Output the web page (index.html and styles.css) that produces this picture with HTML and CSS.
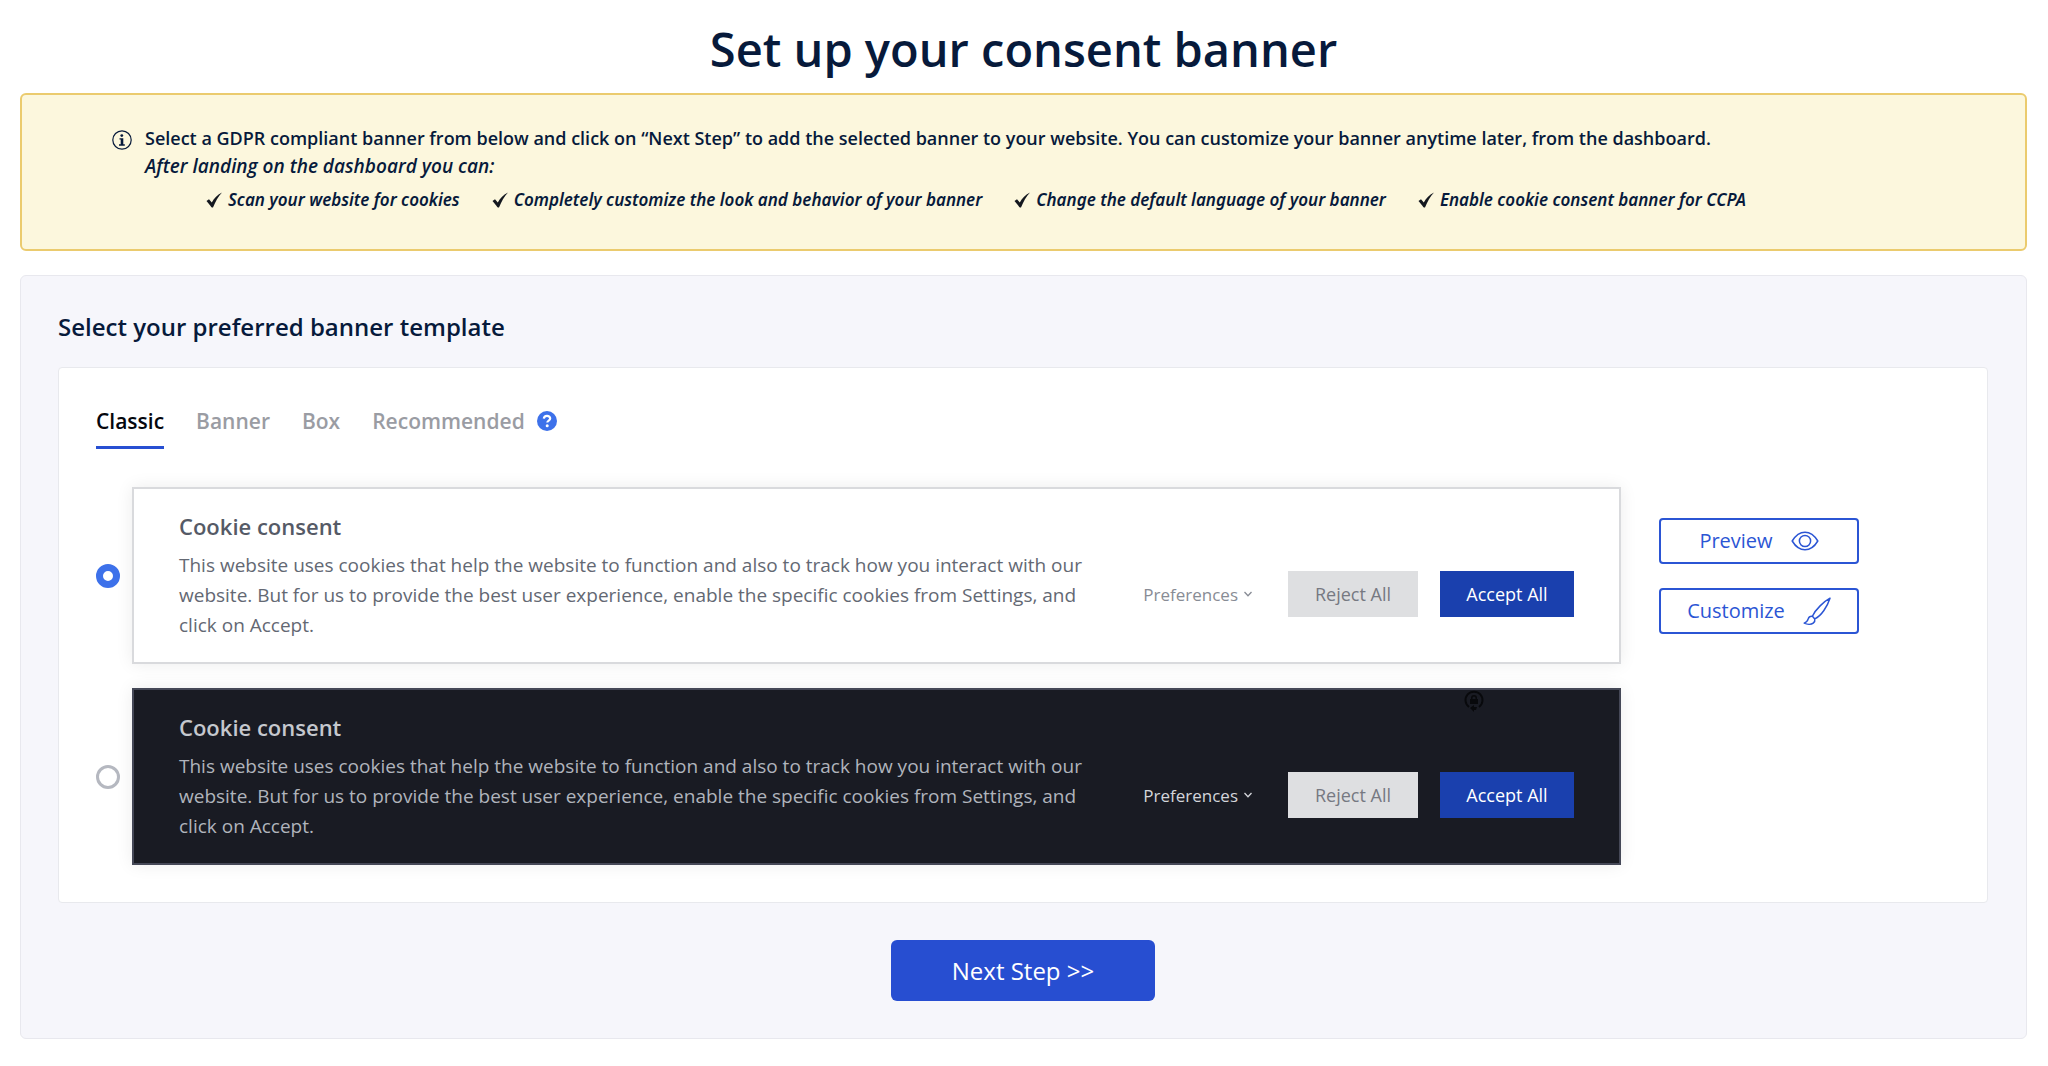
FILE: index.html
```html
<!DOCTYPE html>
<html lang="en">
<head>
<meta charset="utf-8">
<title>Set up your consent banner</title>
<link rel="stylesheet" href="styles.css">
</head>
<body>
<svg class="sprite" aria-hidden="true">
  <symbol id="check" viewBox="0 0 16 16"><path d="M0.5 9 3 7.2 5.8 10.4C8 6.6 11 3 16 0.6 12 5 9.6 9.500 7 15.500 5.600 15.500 5.200 15 4.600 14Z"/></symbol>
  <symbol id="chevron" viewBox="0 0 10 8"><path d="M1.500 2l3.500 3.800L8.500 2" fill="none" stroke="currentColor" stroke-width="1.300"/></symbol>
</svg>
<main class="page">
  <h1 class="title">Set up your consent banner</h1>

  <section class="notice">
    <svg class="notice-icon" viewBox="0 0 20 20" aria-hidden="true">
      <circle cx="10" cy="10" r="9.200" fill="none" stroke="currentColor" stroke-width="1.200"/>
      <circle cx="9.800" cy="5.600" r="1.400"/>
      <path d="M7.500 8.200h3.800v6h1.500v1.600H7v-1.600h1.700V9.600H7.500z"/>
    </svg>
    <div class="notice-body">
      <p class="notice-text">Select a GDPR compliant banner from below and click on “Next Step” to add the selected banner to your website. You can customize your banner anytime later, from the dashboard.</p>
      <p class="notice-text notice-sub">After landing on the dashboard you can:</p>
      <ul class="features">
        <li><svg class="check"><use href="#check"/></svg>Scan your website for cookies</li>
        <li><svg class="check"><use href="#check"/></svg>Completely customize the look and behavior of your banner</li>
        <li><svg class="check"><use href="#check"/></svg>Change the default language of your banner</li>
        <li><svg class="check"><use href="#check"/></svg>Enable cookie consent banner for CCPA</li>
      </ul>
    </div>
  </section>

  <form class="panel">
    <h2 class="panel-title">Select your preferred banner template</h2>
    <div class="card">
      <nav class="tabs">
        <a class="tab tab-active" href="#classic">Classic</a>
        <a class="tab" href="#banner">Banner</a>
        <a class="tab" href="#box">Box</a>
        <a class="tab" href="#recommended">Recommended
          <svg class="help" viewBox="0 0 20 20" aria-hidden="true"><circle cx="10" cy="10" r="10" fill="#3d71ea"/><path d="M6.800 7.600C7 5.600 8.300 4.800 10 4.800c1.900 0 3.200 1 3.200 2.600 0 2.200-2.900 2.100-2.900 4.200" fill="none" stroke="#fff" stroke-width="2.200"/><circle cx="10.200" cy="14.700" r="1.500" fill="#fff"/></svg>
        </a>
      </nav>

      <div class="template">
        <input class="radio" type="radio" name="template" id="light" aria-label="Light banner" checked>
        <div class="preview">
          <div class="preview-copy">
            <h3 class="preview-title"><label for="light">Cookie consent</label></h3>
            <p class="preview-text">This website uses cookies that help the website to function and also to track how you interact with our website. But for us to provide the best user experience, enable the specific cookies from Settings, and click on Accept.</p>
          </div>
          <div class="preview-actions">
            <button type="button" class="prefs">Preferences<svg class="chevron"><use href="#chevron"/></svg></button>
            <button type="button" class="consent reject">Reject All</button>
            <button type="button" class="consent accept">Accept All</button>
          </div>
        </div>
        <div class="side">
          <button type="button" class="outline">Preview
            <svg class="icon-eye" viewBox="0 0 28 20" aria-hidden="true"><path d="M1.200 10C4.600 4.300 9 1.200 14 1.200S23.400 4.300 26.800 10C23.400 15.700 19 18.800 14 18.800S4.600 15.700 1.200 10z"/><circle cx="14" cy="10" r="5.600"/></svg>
          </button>
          <button type="button" class="outline">Customize
            <svg class="icon-brush" viewBox="0 0 28 28" aria-hidden="true"><path d="M27 1.200C21 4.500 12.500 12.300 9.400 19.200l2.400 2.700C18.500 18.800 24.300 9.500 27 1.200zM9.400 19.200c-2.200-.3-3.700 1-4.200 2.700-.6 2-1.800 3.600-4 4.200 2.800 1.300 7 1.500 9 0 1.300-1 1.900-2.600 1.600-4.200"/></svg>
          </button>
        </div>
      </div>

      <div class="template">
        <input class="radio" type="radio" name="template" id="dark" aria-label="Dark banner">
        <div class="preview preview-dark">
          <div class="preview-copy">
            <h3 class="preview-title"><label for="dark">Cookie consent</label></h3>
            <p class="preview-text">This website uses cookies that help the website to function and also to track how you interact with our website. But for us to provide the best user experience, enable the specific cookies from Settings, and click on Accept.</p>
          </div>
          <div class="preview-actions">
            <button type="button" class="prefs">Preferences<svg class="chevron"><use href="#chevron"/></svg></button>
            <button type="button" class="consent reject">Reject All</button>
            <button type="button" class="consent accept">Accept All</button>
          </div>
          <svg class="pointer" viewBox="0 0 20 22" aria-hidden="true"><path d="M5 17A8.500 8.500 0 1 1 15 17" fill="none" stroke="#08090c" stroke-width="2"/><path d="M6 18l4-3v2h3l-1 3h-2v2z" fill="#08090c"/><path d="M6 9h1V8a3 3 0 0 1 6 0v1h1v5H6zM8.500 9h3V8a1.500 1.500 0 0 0-3 0z" fill="#08090c"/></svg>
        </div>
        <div class="side"></div>
      </div>
    </div>
    <button type="submit" class="next">Next Step &gt;&gt;</button>
  </form>
</main>
</body>
</html>
```
FILE: styles.css
```css
* { box-sizing: border-box; }
body { margin: 0; background: #fff; color: #071a3b; font-family: "Open Sans", "Noto Sans", sans-serif; }
h1, h2, h3, p, ul { margin: 0; padding: 0; font-weight: 600; }
button { font: inherit; cursor: pointer; border: 0; padding: 0; }
.sprite { display: none; }
.page { padding: 17px 21px 28px 20px; }

.title { font-size: 47px; line-height: 64px; margin-bottom: 12px; text-align: center; }

.notice { display: flex; gap: 13px; padding: 29px 90px; min-height: 158px; background: #fcf7dd; border: 2px solid #ebcb6e; border-radius: 6px; margin-bottom: 24px; }
.notice-icon { width: 20px; height: 20px; margin-top: 6px; flex: none; fill: currentColor; }
.notice-text { font-size: 18px; line-height: 28px; }
.notice-sub { font-size: 19px; font-style: italic; }
.features { display: flex; gap: 32px; margin-top: 6px; padding-left: 61px; list-style: none; font: italic 600 17px/28px "Noto Sans", sans-serif; white-space: nowrap; }
.features li { display: flex; align-items: center; gap: 6px; }
.check { width: 16px; height: 16px; fill: #14181f; }

.panel { display: flex; flex-direction: column; padding: 33px 38px 37px 37px; background: #f6f6fb; border: 1px solid #e8e8ee; border-radius: 6px; }
.panel-title { font-size: 24px; line-height: 36px; margin-bottom: 22px; }
.card { background: #fff; border: 1px solid #e8e9ed; border-radius: 4px; padding: 36px 37px 37px; }

.tabs { display: flex; gap: 32px; margin-bottom: 38px; }
.tab { display: flex; align-items: center; gap: 12px; height: 45px; padding-bottom: 9px; color: #9a9ca3; font-size: 21px; line-height: 32px; font-weight: 600; text-decoration: none; border-bottom: 3px solid transparent; }
.tab-active { color: #05070d; border-color: #274fd2; }
.help { width: 20px; height: 20px; }

.template { display: flex; align-items: center; }
.template + .template { margin-top: 24px; }
.radio { appearance: none; flex: none; width: 24px; height: 24px; margin: 0 12px 0 0; border: 3px solid #b5b8c0; border-radius: 50%; background: #fff; }
.radio:checked { border: 7px solid #3d71ea; }
.preview { position: relative; flex: 1; display: flex; gap: 48px; padding: 20px 45px 22px; background: #fff; border: 2px solid #d9dadd; box-shadow: 0 0 16px rgba(0, 0, 0, .08); }
.preview-copy { flex: 1; }
.preview-title { font-size: 22px; line-height: 34px; margin-bottom: 7px; color: #555a66; }
.preview-text { font-size: 19px; line-height: 30px; font-weight: 400; color: #636873; }
.preview-actions { display: flex; align-items: center; padding-top: 39px; }
.prefs { display: flex; align-items: center; gap: 5px; margin-right: 35px; background: none; color: #888c95; font-size: 17px; }
.chevron { width: 10px; height: 8px; }
.consent { width: 130px; height: 46px; font-size: 18px; }
.reject { background: #dedfe1; color: #767982; margin-right: 22px; }
.accept { width: 134px; background: #1a40ae; color: #fff; }
.preview-dark { background: #191b23; border-color: #454857; }
.preview-dark .preview-title { color: #c5c8ce; }
.preview-dark .preview-text { color: #b0b4bc; }
.preview-dark .prefs { color: #d3d5da; }
.pointer { position: absolute; right: 135px; top: 0; width: 20px; height: 22px; }

.side { flex: none; width: 291px; margin-left: 38px; padding-right: 91px; display: flex; flex-direction: column; gap: 24px; }
.outline { display: flex; align-items: center; justify-content: center; gap: 18px; height: 46px; background: #fff; color: #2b55d4; border: 2px solid #2b55d4; border-radius: 4px; font-size: 20px; }
.outline svg { fill: none; stroke: currentColor; stroke-width: 1.500; stroke-linejoin: round; }
.icon-eye { width: 28px; height: 20px; }
.icon-brush { width: 28px; height: 28px; }

.next { align-self: center; width: 264px; height: 61px; margin-top: 37px; background: #274ed1; color: #fff; border-radius: 6px; font-size: 24px; }
```
